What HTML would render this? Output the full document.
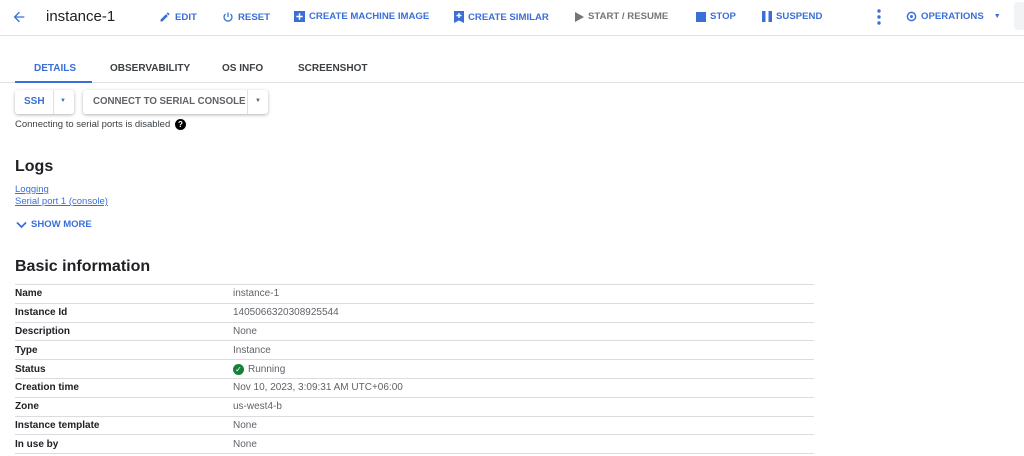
<!DOCTYPE html>
<html><head><style>
*{box-sizing:border-box;margin:0;padding:0}
body{width:1024px;height:456px;overflow:hidden;background:#fff;font-family:"Liberation Sans",Arial,sans-serif;color:#202124;position:relative}
.a{position:absolute}
.tb{font-size:9.6px;font-weight:bold;color:#3b6fd8;white-space:nowrap;display:flex;align-items:center;gap:4px}
.tab{font-size:10px;font-weight:bold;color:#3c4043;top:63px}
table{position:absolute;left:15px;top:284px;width:799px;border-collapse:collapse;font-size:10px}
td{height:18.8px;border-top:1px solid #dadce0;padding:0;vertical-align:middle}
tr:last-child td{border-bottom:1px solid #dadce0}
td:first-child{font-weight:bold;width:218px}
td:last-child{color:#5f6368}
a{color:#3b6fd8;text-decoration:underline}
</style></head><body>
<div class="a" style="left:0;top:35px;width:1024px;height:1px;background:#e0e0e0"></div>
<svg class="a" style="left:11px;top:9px" width="16" height="16" viewBox="0 0 24 24"><path d="M20 11H7.8l5.6-5.6L12 4l-8 8 8 8 1.4-1.4L7.8 13H20z" fill="#3b6fd8"/></svg>
<div class="a" style="left:46px;top:8px;font-size:15px">instance-1</div>
<div class="a tb" style="left:159px;top:11px"><svg width="12" height="12" viewBox="0 0 24 24"><path d="M3 17.2V21h3.8L17.8 9.9l-3.7-3.7zM20.7 7c.4-.4.4-1 0-1.4l-2.3-2.3c-.4-.4-1-.4-1.4 0l-1.8 1.8 3.7 3.7z" fill="#3b6fd8"/></svg>EDIT</div>
<div class="a tb" style="left:222px;top:11px"><svg width="12" height="12" viewBox="0 0 24 24"><path d="M12 3v9M7 6a8 8 0 1 0 10 0" stroke="#3b6fd8" stroke-width="2.6" fill="none"/></svg>RESET</div>
<div class="a tb" style="left:294px;top:11px"><svg width="11" height="11" viewBox="0 0 12 12"><rect width="12" height="12" fill="#3b6fd8"/><path d="M6 2.5v7M2.5 6h7" stroke="#fff" stroke-width="1.6"/></svg>CREATE MACHINE IMAGE</div>
<div class="a tb" style="left:454px;top:11px"><svg width="10" height="12" viewBox="0 0 10 12"><path d="M0 0h10v12l-5-2.5L0 12z" fill="#3b6fd8"/><path d="M5 2v5M2.5 4.5h5" stroke="#fff" stroke-width="1.4"/></svg>CREATE SIMILAR</div>
<div class="a tb" style="left:575px;top:11px;color:#757575"><svg width="9" height="10" viewBox="0 0 9 10"><path d="M0 0l9 5-9 5z" fill="#757575"/></svg>START / RESUME</div>
<div class="a tb" style="left:696px;top:11px"><svg width="10" height="10"><rect width="10" height="10" fill="#3b6fd8"/></svg>STOP</div>
<div class="a tb" style="left:762px;top:11px"><svg width="10" height="11"><rect width="3.5" height="11" fill="#3b6fd8"/><rect x="6.5" width="3.5" height="11" fill="#3b6fd8"/></svg>SUSPEND</div>
<svg class="a" style="left:877px;top:9px" width="4" height="16"><circle cx="2" cy="2" r="1.7" fill="#3b6fd8"/><circle cx="2" cy="8" r="1.7" fill="#3b6fd8"/><circle cx="2" cy="14" r="1.7" fill="#3b6fd8"/></svg>
<div class="a tb" style="left:906px;top:11px"><svg width="11" height="11" viewBox="0 0 12 12"><circle cx="6" cy="6" r="4.5" stroke="#3b6fd8" stroke-width="1.6" fill="none"/><circle cx="6" cy="6" r="1.6" fill="#3b6fd8"/></svg>OPERATIONS <span style="font-size:7px;margin-left:6px">▼</span></div>
<div class="a" style="left:1014px;top:2px;width:10px;height:28px;background:#f1f3f4;border-radius:4px 0 0 4px"></div>

<div class="a tab" style="left:34px;color:#3b6fd8">DETAILS</div>
<div class="a tab" style="left:110px">OBSERVABILITY</div>
<div class="a tab" style="left:222px">OS INFO</div>
<div class="a tab" style="left:298px">SCREENSHOT</div>
<div class="a" style="left:0;top:82px;width:1024px;height:1px;background:#e0e0e0"></div>
<div class="a" style="left:15px;top:81px;width:77px;height:2px;background:#3b6fd8"></div>

<div class="a" style="left:15px;top:90px;width:59px;height:24px;box-shadow:0 1px 3px rgba(0,0,0,.3);border-radius:3px;background:#fff"></div>
<div class="a" style="left:53px;top:90px;width:1px;height:24px;background:#e0e0e0"></div>
<div class="a" style="left:24px;top:96px;font-size:10px;font-weight:bold;color:#3b6fd8">SSH</div>
<div class="a" style="left:60px;top:98px;font-size:6px;color:#3b6fd8">▼</div>
<div class="a" style="left:83px;top:90px;width:185px;height:24px;box-shadow:0 1px 3px rgba(0,0,0,.3);border-radius:3px;background:#fff"></div>
<div class="a" style="left:247px;top:90px;width:1px;height:24px;background:#e0e0e0"></div>
<div class="a" style="left:93px;top:96px;font-size:9.7px;font-weight:bold;color:#5f6368">CONNECT TO SERIAL CONSOLE</div>
<div class="a" style="left:255px;top:98px;font-size:6px;color:#5f6368">▼</div>
<div class="a" style="left:15px;top:119px;font-size:9.5px;color:#3c4043">Connecting to serial ports is disabled</div>
<div class="a" style="left:175px;top:119px;width:11px;height:11px;border-radius:50%;background:#000;color:#fff;font-size:8px;font-weight:bold;text-align:center;line-height:11px">?</div>

<div class="a" style="left:15px;top:158px;font-size:16px;font-weight:bold">Logs</div>
<div class="a" style="left:15px;top:184px;font-size:9.5px"><a>Logging</a></div>
<div class="a" style="left:15px;top:196px;font-size:9.5px"><a>Serial port 1 (console)</a></div>
<div class="a tb" style="left:16px;top:219px;font-size:9.5px"><svg width="11" height="8" viewBox="0 0 11 8"><path d="M1 1.5l4.5 4.5L10 1.5" stroke="#3b6fd8" stroke-width="1.8" fill="none"/></svg>SHOW MORE</div>
<div class="a" style="left:15px;top:258px;font-size:16px;font-weight:bold">Basic information</div>

<table>
<tr><td>Name</td><td>instance-1</td></tr>
<tr><td>Instance Id</td><td>1405066320308925544</td></tr>
<tr><td>Description</td><td>None</td></tr>
<tr><td>Type</td><td>Instance</td></tr>
<tr><td>Status</td><td><span style="display:inline-block;width:11px;height:11px;border-radius:50%;background:#188038;color:#fff;font-size:8px;text-align:center;line-height:11px;vertical-align:middle;margin-right:4px">✓</span><span style="vertical-align:middle">Running</span></td></tr>
<tr><td>Creation time</td><td>Nov 10, 2023, 3:09:31 AM UTC+06:00</td></tr>
<tr><td>Zone</td><td>us-west4-b</td></tr>
<tr><td>Instance template</td><td>None</td></tr>
<tr><td>In use by</td><td>None</td></tr>
</table>
</body></html>
